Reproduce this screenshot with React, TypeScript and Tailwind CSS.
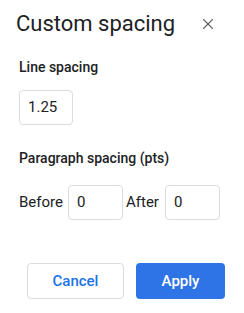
import { X } from "lucide-react";

export default function App() {
    return (
        <div className="w-[244px] h-[313px] bg-white flex flex-col font-['Roboto',sans-serif] text-[#202124]">
            {/* ヘッダー */}
            <div className="flex items-center justify-between pl-4 pr-[27px] pt-[9px]">
                <span className="text-[22px] leading-[30px]">Custom spacing</span>
                <X className="w-[18px] h-[18px] text-[#5f6368]" strokeWidth={1.5} />
            </div>

            {/* 行間 */}
            <div className="pl-[19px] pt-[18px]">
                <div className="text-[14px] font-medium leading-5">Line spacing</div>
                <div className="mt-[13px] w-[54px] h-[35px] border border-[#dadce0] rounded flex items-center pl-[8px] text-[15px]">
                    1.25
                </div>
            </div>

            {/* 段落間隔 */}
            <div className="pl-[19px] pt-[23px]">
                <div className="text-[14px] font-medium leading-5">Paragraph spacing (pts)</div>
                <div className="mt-[17px] flex items-center">
                    <span className="text-[15px] w-[49px]">Before</span>
                    <div className="w-[55px] h-[35px] border border-[#dadce0] rounded flex items-center pl-[8px] text-[15px]">
                        0
                    </div>
                    <span className="text-[15px] ml-[3px] w-[39px]">After</span>
                    <div className="w-[55px] h-[35px] border border-[#dadce0] rounded flex items-center pl-[8px] text-[15px]">
                        0
                    </div>
                </div>
            </div>

            {/* ボタン */}
            <div className="mt-[43px] flex pl-[27px] gap-[12px]">
                <button className="w-[97px] h-[36px] border border-[#dadce0] rounded text-[#1a73e8] text-[15px] font-medium">
                    Cancel
                </button>
                <button className="w-[89px] h-[36px] rounded bg-[#2f74e6] text-white text-[15px] font-medium">
                    Apply
                </button>
            </div>
        </div>
    );
}
